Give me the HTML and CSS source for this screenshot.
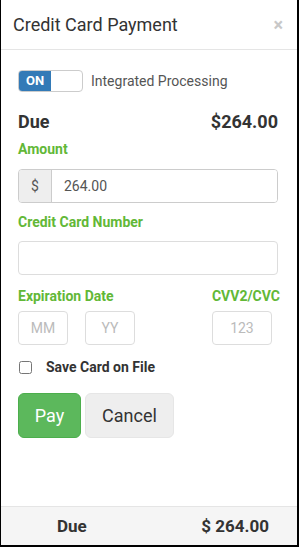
FILE: index.html
```html
<!DOCTYPE html>
<html lang="en">
  <head>
    <meta charset="UTF-8" />
    <meta name="viewport" content="width=device-width, initial-scale=1.0" />
    <title>Credit Card Payment</title>
    <link rel="stylesheet" href="styles.css">
  </head>
  <body>
    <div class="modal">
      <div class="modal-header">
        <span class="modal-title">Credit Card Payment</span>
        <span class="close">&times;</span>
      </div>

      <div class="modal-body">
        <div class="toggle-row">
          <div class="toggle">
            <span class="toggle-on">ON</span>
            <span class="toggle-off"></span>
          </div>
          <span class="toggle-label">Integrated Processing</span>
        </div>

        <div class="due-row">
          <span>Due</span>
          <span>$264.00</span>
        </div>

        <label class="field-label">Amount</label>
        <div class="input-group">
          <span class="addon">$</span>
          <input type="text" value="264.00" />
        </div>

        <label class="field-label">Credit Card Number</label>
        <input type="text" class="form-input card-input" />

        <div class="exp-row">
          <div class="exp-col">
            <label class="field-label">Expiration Date</label>
            <div class="exp-inputs">
              <input type="text" class="form-input small" placeholder="MM" />
              <input type="text" class="form-input small" placeholder="YY" />
            </div>
          </div>
          <div class="cvv-col">
            <label class="field-label">CVV2/CVC</label>
            <input type="text" class="form-input cvv" placeholder="123" />
          </div>
        </div>

        <label class="save-card">
          <input type="checkbox" />
          <span>Save Card on File</span>
        </label>

        <div class="buttons">
          <button class="btn btn-pay">Pay</button>
          <button class="btn btn-cancel">Cancel</button>
        </div>
      </div>

      <div class="modal-footer">
        <span>Due</span>
        <span>$ 264.00</span>
      </div>
    </div>
  </body>
</html>
```

FILE: styles.css
```css
body {
  font-family: Roboto, "Liberation Sans", Arial, sans-serif;
  margin: 0;
  padding: 0;
  background-color: #fff;
  color: #333;
}

.modal {
  box-sizing: border-box;
  width: 299px;
  height: 547px;
  border-left: 1px solid #000;
  border-right: 2px solid #000;
  border-bottom: 2px solid #000;
  display: flex;
  flex-direction: column;
}

.modal-header {
  display: flex;
  justify-content: space-between;
  align-items: center;
  height: 50px;
  box-sizing: border-box;
  padding: 0 14px 1px 12px;
  border-bottom: 1px solid #e5e5e5;
}

.modal-title {
  font-size: 18px;
  color: #333;
}

.close {
  font-size: 18px;
  font-weight: bold;
  color: #c8c8c8;
}

.modal-body {
  flex: 1;
  padding: 20px 19px 0 17px;
}

.toggle-row {
  display: flex;
  align-items: center;
  height: 22px;
}

.toggle {
  display: flex;
  width: 65px;
  height: 22px;
  box-sizing: border-box;
  border: 1px solid #ccc;
  border-radius: 4px;
  overflow: hidden;
}

.toggle-on {
  width: 32px;
  background-color: #337ab7;
  color: #fff;
  font-size: 13px;
  font-weight: bold;
  line-height: 20px;
  text-align: center;
}

.toggle-off {
  flex: 1;
}

.toggle-label {
  margin-left: 8px;
  font-size: 14px;
  color: #555;
}

.due-row {
  display: flex;
  justify-content: space-between;
  margin-top: 18px;
  font-size: 18px;
  font-weight: bold;
  line-height: 24px;
}

.field-label {
  display: block;
  font-size: 14px;
  font-weight: bold;
  color: #62b837;
  line-height: 20px;
}

.due-row + .field-label {
  margin-top: 5px;
}

.input-group {
  display: flex;
  margin-top: 10px;
  height: 34px;
  box-sizing: border-box;
  border: 1px solid #ccc;
  border-radius: 4px;
  overflow: hidden;
}

.addon {
  width: 32px;
  background-color: #eee;
  border-right: 1px solid #ccc;
  text-align: center;
  line-height: 32px;
  font-size: 14px;
  color: #555;
}

.input-group input {
  flex: 1;
  border: none;
  padding: 0 12px;
  font-family: inherit;
  font-size: 14px;
  color: #555;
  outline: none;
  min-width: 0;
}

.input-group + .field-label {
  margin-top: 9px;
}

.form-input {
  display: block;
  box-sizing: border-box;
  height: 34px;
  border: 1px solid #ddd;
  border-radius: 4px;
  font-family: inherit;
  font-size: 14px;
  padding: 0 12px;
  color: #555;
}

.form-input::placeholder {
  color: #bbb;
}

.card-input {
  width: 260px;
  margin-top: 9px;
}

.exp-row {
  display: flex;
  justify-content: space-between;
  margin-top: 11px;
}

.exp-inputs {
  display: flex;
  gap: 17px;
  margin-top: 5px;
}

.small {
  width: 50px;
  padding: 0;
  text-align: center;
}

.cvv-col {
  margin-right: -2px;
}

.cvv {
  width: 60px;
  margin-top: 5px;
  padding: 0;
  text-align: center;
}

.save-card {
  display: flex;
  align-items: center;
  margin-top: 14px;
  font-size: 14px;
  font-weight: bold;
  color: #333;
}

.save-card input {
  width: 13px;
  height: 13px;
  margin: 0 14px 0 1px;
}

.buttons {
  display: flex;
  gap: 4px;
  margin-top: 18px;
}

.btn {
  height: 45px;
  border-radius: 6px;
  font-family: inherit;
  font-size: 18px;
  border: 1px solid transparent;
  cursor: pointer;
}

.btn-pay {
  width: 63px;
  background-color: #5cb85c;
  border-color: #4cae4c;
  color: #fff;
}

.btn-cancel {
  width: 89px;
  background-color: #eee;
  border-color: #e6e6e6;
  color: #333;
}

.modal-footer {
  display: flex;
  justify-content: space-between;
  align-items: center;
  height: 38px;
  padding: 0 28px 0 56px;
  background-color: #f5f5f5;
  border-top: 1px solid #e5e5e5;
  font-size: 17px;
  font-weight: bold;
  color: #333;
}
```
